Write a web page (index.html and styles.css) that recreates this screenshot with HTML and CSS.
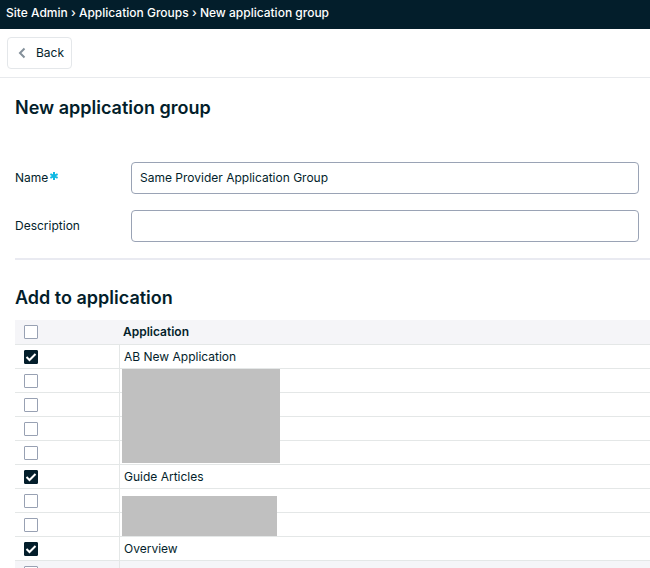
FILE: index.html
```
<!DOCTYPE html>
<html lang="en">
<head>
<meta charset="utf-8">
<title>New application group</title>
<link rel="stylesheet" href="styles.css">
</head>
<body>
<nav class="breadcrumb" aria-label="Breadcrumb"><a href="#">Site Admin</a> › <a href="#">Application Groups</a> › <a href="#">New application group</a></nav>
<div class="toolbar">
  <button class="back" type="button">
    <svg class="chevron" viewBox="0 0 8 12" aria-hidden="true"><path d="M6.5 1.5 2 6l4.500 4.500"/></svg>
    Back
  </button>
</div>
<main>
  <h1 class="heading">New application group</h1>
  <form class="fields">
    <label for="name">Name<svg class="required" viewBox="0 0 8 8" aria-hidden="true"><path d="M4 0v8M.4 2l7.200 4M7.600 2 .4 6"/></svg></label>
    <input class="text" id="name" type="text" value="Same Provider Application Group" required>
    <label for="description">Description</label>
    <input class="text" id="description" type="text">
  </form>
  <hr class="divider">
  <h2 class="heading">Add to application</h2>
  <table class="apps">
    <thead>
      <tr><th class="pick"><input type="checkbox" aria-label="Select all"></th><th>Application</th></tr>
    </thead>
    <tbody>
      <tr><td class="pick"><input type="checkbox" id="a1" checked></td><td><label for="a1">AB New Application</label></td></tr>
      <tr><td class="pick"><input type="checkbox" aria-label="Hidden application"></td><td><span class="redacted redacted-four"></span></td></tr>
      <tr><td class="pick"><input type="checkbox" aria-label="Hidden application"></td><td></td></tr>
      <tr><td class="pick"><input type="checkbox" aria-label="Hidden application"></td><td></td></tr>
      <tr><td class="pick"><input type="checkbox" aria-label="Hidden application"></td><td></td></tr>
      <tr><td class="pick"><input type="checkbox" id="a6" checked></td><td><label for="a6">Guide Articles</label></td></tr>
      <tr><td class="pick"><input type="checkbox" aria-label="Hidden application"></td><td><span class="redacted redacted-two"></span></td></tr>
      <tr><td class="pick"><input type="checkbox" aria-label="Hidden application"></td><td></td></tr>
      <tr><td class="pick"><input type="checkbox" id="a9" checked></td><td><label for="a9">Overview</label></td></tr>
      <tr class="hovered"><td class="pick"><input type="checkbox" aria-label="Hidden application"></td><td></td></tr>
    </tbody>
  </table>
</main>
</body>
</html>
```
FILE: styles.css
```
* { box-sizing: border-box; }

html { scrollbar-width: none; }

body {
  margin: 0;
  background: #fff;
  color: #031e2b;
  font: 12px/16px Inter, "Liberation Sans", sans-serif;
}

button, input { font: inherit; color: inherit; }

.breadcrumb {
  padding: 5px 6px 8px;
  background: #031e2b;
  color: #fff;
  font-weight: 500;
}

.breadcrumb a { color: inherit; text-decoration: none; }

.toolbar {
  padding: 8px 7px;
  border-bottom: 1px solid #e8eaed;
}

.back {
  display: flex;
  align-items: center;
  gap: 10px;
  height: 32px;
  padding: 0 7px 0 10px;
  border: 1px solid #e4e7ea;
  border-radius: 4px;
  background: #fff;
}

.chevron {
  width: 8px;
  height: 12px;
  fill: none;
  stroke: #84909a;
  stroke-width: 2;
}

main { padding-left: 15px; }

.heading {
  margin: 0;
  font-size: 18px;
  line-height: 24px;
  font-weight: 600;
}

h1.heading { padding: 18px 0 42px; }

h2.heading { padding: 26px 0 10px; }

.fields {
  display: grid;
  grid-template-columns: 100px 1fr;
  gap: 16px;
  align-items: center;
  padding-right: 11px;
}

.required {
  width: 8px;
  height: 8px;
  margin-left: 2px;
  vertical-align: 2px;
  stroke: #10b9e4;
  stroke-width: 2;
}

.text {
  width: 100%;
  height: 32px;
  padding: 0 8px 1px;
  border: 1px solid #9aa3b5;
  border-radius: 4px;
  background: #fff;
}

.divider {
  height: 2px;
  margin: 16px 0 0;
  border: 0;
  background: #e9eaf1;
}

.apps {
  width: 100%;
  border-collapse: separate;
  border-spacing: 0;
  table-layout: fixed;
}

.apps th, .apps td {
  height: 24px;
  padding: 0 4px;
  border-bottom: 1px solid #e4e7e7;
  text-align: left;
}

.apps th {
  height: 25px;
  padding: 0 3px;
  background: #f5f5f8;
  font-weight: 600;
}

.apps td { position: relative; }

.apps .pick {
  width: 105px;
  padding: 0 9px;
}

.apps td.pick { border-right: 1px solid #e4e7e7; }

.hovered td { background: #f5f5f8; }

.pick input {
  display: block;
  appearance: none;
  width: 14px;
  height: 14px;
  margin: 0;
  border: 1px solid #98a1b3;
  border-radius: 1px;
  background: #fff;
}

.pick input:checked {
  border-color: #031e2b;
  background: #031e2b url("data:image/svg+xml,%3Csvg xmlns='http://www.w3.org/2000/svg' viewBox='0 0 12 12'%3E%3Cpath d='M1.500 6 4.500 9 10.500 3' fill='none' stroke='white' stroke-width='2'/%3E%3C/svg%3E") center / 12px no-repeat;
}

.redacted {
  position: absolute;
  z-index: 1;
  left: 2px;
  background: #c0c0c0;
}

.redacted-four {
  top: 0;
  width: 158px;
  height: 94px;
}

.redacted-two {
  top: 7px;
  width: 155px;
  height: 40px;
}
```
